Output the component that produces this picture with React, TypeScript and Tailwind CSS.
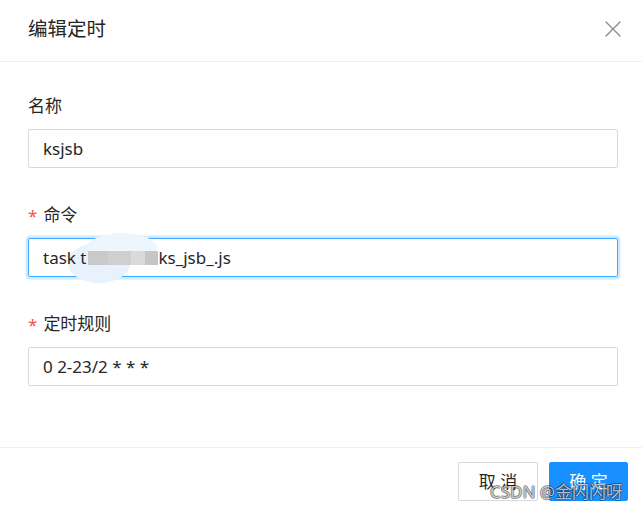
import React from "react";

const FONT = '"Noto Sans", "Noto Sans CJK SC", sans-serif';

function FormLabel({ text, required }: { text: string; required?: boolean }) {
  return (
    <div className="mb-[9px] flex h-[28px] items-center text-[17px] leading-[28px] text-[#262626]">
      {required && <span className="mr-[6px] pt-[2px] text-[17px] text-[#ff4d4f]">*</span>}
      <span>{text}</span>
    </div>
  );
}

function CloseIcon() {
  return (
    <svg width="16" height="16" viewBox="0 0 16 16" fill="none">
      <path d="M1 1L15 15M15 1L1 15" stroke="#8c8c8c" strokeWidth="1.4" strokeLinecap="round" />
    </svg>
  );
}

export default function App() {
  return (
    <div
      className="relative h-[511px] w-[642px] overflow-hidden bg-white text-[#262626]"
      style={{ fontFamily: FONT }}
    >
      {/* Header */}
      <div className="flex h-[62px] items-center justify-between border-b border-[#f0f0f0] pl-[28px] pr-[21px]">
        <span className="pb-[3px] text-[19.5px]">编辑定时</span>
        <button className="pb-[3px]">
          <CloseIcon />
        </button>
      </div>

      {/* Body */}
      <div className="pb-[28px] pl-[28px] pr-[24px] pt-[30px]">
        <div className="mb-[33px]">
          <FormLabel text="名称" />
          <div className="flex h-[39px] items-center rounded-[2px] border border-[#d9d9d9] px-[14px] text-[17px]">
            ksjsb
          </div>
        </div>

        <div className="mb-[33px]">
          <FormLabel text="命令" required />
          <div className="relative flex h-[39px] items-center rounded-[2px] border border-[#40a9ff] px-[14px] text-[17px] shadow-[0_0_0_2.5px_rgba(24,144,255,0.2)]">
            {/* blurred patch */}
            <div className="absolute left-[39px] top-[4px] h-[40px] w-[62px] rounded-[50%] bg-[#e8f2fc]" />
            <div className="absolute left-[58px] top-[-6px] h-[30px] w-[70px] rounded-[50%] bg-[#eef6fd]" />
            <span className="relative whitespace-pre">task t</span>
            <span className="relative ml-[2px] flex h-[14px] w-[70px]">
              <span className="h-full w-[20px] bg-[#c9c9c9]" />
              <span className="h-full w-[23px] bg-[#cfcfcf]" />
              <span className="h-full w-[14px] bg-[#dadada]" />
              <span className="h-full w-[13px] bg-[#c6c6c6]" />
            </span>
            <span className="relative">ks_jsb_.js</span>
          </div>
        </div>

        <div>
          <FormLabel text="定时规则" required />
          <div className="flex h-[39px] items-center rounded-[2px] border border-[#d9d9d9] px-[14px] text-[17px]">
            0 2-23/2 * * *
          </div>
        </div>
        <div className="h-[33px]" />
      </div>

      {/* Footer */}
      <div className="flex justify-end gap-[11px] border-t border-[#f0f0f0] pr-[14px] pt-[14px]">
        <button className="h-[39px] w-[80px] rounded-[2px] border border-[#d9d9d9] bg-white text-[17px] text-[#262626]">
          取 消
        </button>
        <button className="h-[39px] w-[79px] rounded-[2px] border border-[#1890ff] bg-[#1890ff] text-[17px] text-white">
          确 定
        </button>
      </div>

      {/* watermark */}
      <div
        className="absolute left-[490px] top-[479px] whitespace-nowrap text-[17px] text-[rgba(255,255,255,0.7)]"
        style={{
          textShadow:
            "1px 0 0 rgba(0,0,0,0.4), -1px 0 0 rgba(0,0,0,0.4), 0 1px 0 rgba(0,0,0,0.4), 0 -1px 0 rgba(0,0,0,0.4)",
        }}
      >
        CSDN @金闪闪呀
      </div>
    </div>
  );
}
